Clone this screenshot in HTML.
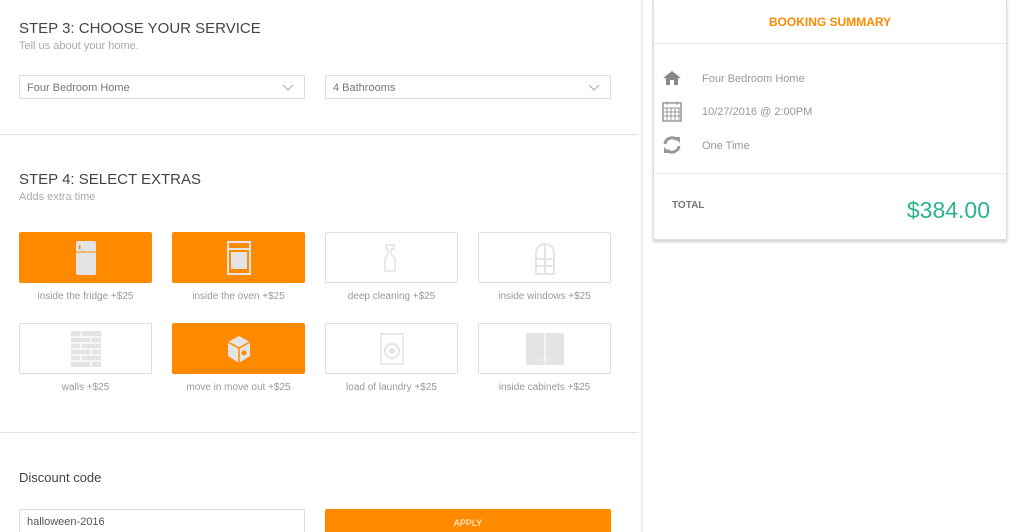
<!DOCTYPE html>
<html><head><meta charset="utf-8"><style>
*{box-sizing:border-box;margin:0;padding:0}
html,body{width:1024px;height:532px;overflow:hidden}
body{background:#fff;font-family:"Liberation Sans",Arial,sans-serif;position:relative}
.a{position:absolute}
h2{position:absolute;font-weight:normal;font-size:15px;color:#444;left:19px}
.sub{position:absolute;left:19px;font-size:11px;color:#aaa}
.sel{position:absolute;height:24px;border:1px solid #ddd;font-size:11px;color:#777;padding:6px 0 0 7px}
.sel svg{position:absolute;right:10px;top:8px}
.hr{position:absolute;left:0;width:638px;height:1px;background:#e4e4e4}
.box{position:absolute;width:133px;height:51px;border:1px solid #ddd;border-radius:2px;display:flex;align-items:center;justify-content:center}
.box.on{background:#ff8a00;border-color:#ff8a00}
.lbl{position:absolute;width:133px;text-align:center;font-size:10px;color:#999}
.card{position:absolute;left:653px;top:-2px;width:354px;height:242px;border:1px solid #ddd;box-shadow:0 2px 3px rgba(0,0,0,.2);background:#fff}
.row{position:absolute;left:702px;font-size:11px;color:#999}
</style></head><body>
<div class="a" style="left:641px;top:0;width:2px;height:532px;background:#eceeee"></div>
<h2 style="top:20px">STEP 3: CHOOSE YOUR SERVICE</h2>
<div class="sub" style="top:40px">Tell us about your home.</div>
<div class="sel" style="left:19px;top:75px;width:286px">Four Bedroom Home<svg width="12" height="8"><path d="M1 1l5 5 5-5" stroke="#aaa" fill="none"/></svg></div>
<div class="sel" style="left:325px;top:75px;width:286px">4 Bathrooms<svg width="12" height="8"><path d="M1 1l5 5 5-5" stroke="#aaa" fill="none"/></svg></div>
<div class="hr" style="top:134px"></div>
<h2 style="top:171px">STEP 4: SELECT EXTRAS</h2>
<div class="sub" style="top:191px">Adds extra time</div>

<div class="box on" style="left:19px;top:232px"><svg width="22" height="36"><rect x="1" y="1" width="20" height="34" rx="2" fill="#e4e4e4"/><line x1="1" y1="12" x2="21" y2="12" stroke="#ff8a00"/><rect x="4" y="5" width="1.5" height="4" fill="#ff8a00"/></svg></div>
<div class="box on" style="left:172px;top:232px"><svg width="24" height="34"><rect x="1" y="1" width="22" height="32" fill="none" stroke="#e4e4e4" stroke-width="2"/><line x1="1" y1="8" x2="23" y2="8" stroke="#e4e4e4" stroke-width="2"/><rect x="4" y="11" width="16" height="17" fill="#e4e4e4"/></svg></div>
<div class="box" style="left:325px;top:232px"><svg width="20" height="30"><path d="M4 2h8v4h-3v4l4 6v12H3V16l3-6V6H4z" fill="none" stroke="#e4e4e4" stroke-width="1.5"/></svg></div>
<div class="box" style="left:478px;top:232px"><svg width="22" height="34"><path d="M2 33V12a9 9 0 0118 0v21z" fill="none" stroke="#e4e4e4" stroke-width="2"/><path d="M11 4v29M2 18h18M2 25h18" stroke="#e4e4e4" stroke-width="2"/></svg></div>
<div class="lbl" style="left:19px;top:291px">inside the fridge +$25</div>
<div class="lbl" style="left:172px;top:291px">inside the oven +$25</div>
<div class="lbl" style="left:325px;top:291px">deep cleaning +$25</div>
<div class="lbl" style="left:478px;top:291px">inside windows +$25</div>

<div class="box" style="left:19px;top:323px"><svg width="30" height="36"><rect x="0" y="0" width="30" height="36" fill="#e4e4e4"/><path d="M0 6h30M0 12h30M0 18h30M0 24h30M0 30h30M10 0v6M20 6v6M10 12v6M20 18v6M10 24v6M20 30v6" stroke="#fff" stroke-width="1.2"/></svg></div>
<div class="box on" style="left:172px;top:323px"><svg width="26" height="30"><path d="M2 8l11-6 11 6v14l-11 7-11-7z" fill="#e4e4e4"/><path d="M2 8l11 6 11-6M13 14v15" stroke="#ff8a00" stroke-width="1.5" fill="none"/><circle cx="18" cy="19" r="2.5" fill="#ff8a00"/></svg></div>
<div class="box" style="left:325px;top:323px"><svg width="24" height="32"><rect x="1" y="1" width="22" height="30" fill="none" stroke="#e4e4e4" stroke-width="1.5"/><circle cx="12" cy="18" r="7" fill="none" stroke="#e4e4e4" stroke-width="2"/><circle cx="12" cy="18" r="3" fill="#e4e4e4"/></svg></div>
<div class="box" style="left:478px;top:323px"><svg width="38" height="32"><rect width="38" height="32" fill="#e4e4e4"/><line x1="19" y1="0" x2="19" y2="32" stroke="#fff"/><path d="M14 27h3M21 27h3" stroke="#fff"/></svg></div>
<div class="lbl" style="left:19px;top:382px">walls +$25</div>
<div class="lbl" style="left:172px;top:382px">move in move out +$25</div>
<div class="lbl" style="left:325px;top:382px">load of laundry +$25</div>
<div class="lbl" style="left:478px;top:382px">inside cabinets +$25</div>

<div class="hr" style="top:432px"></div>
<div class="a" style="left:19px;top:470px;font-size:13px;color:#444">Discount code</div>
<div class="sel" style="left:19px;top:509px;width:286px;height:30px;color:#555">halloween-2016</div>
<div class="a" style="left:325px;top:509px;width:286px;height:30px;background:#ff8a00;color:#fff;font-size:9px;text-align:center;padding-top:9px;border-radius:2px">APPLY</div>

<div class="card">
<div class="a" style="left:0;top:16px;width:352px;text-align:center;color:#ff8a00;font-weight:bold;font-size:12px">BOOKING SUMMARY</div>
<div class="a" style="left:0;top:44px;width:352px;height:1px;background:#e8e8e8"></div>
<div class="a" style="left:0;top:174px;width:352px;height:1px;background:#e8e8e8"></div>
<div class="a" style="left:18px;top:201px;font-size:10px;font-weight:bold;color:#777">TOTAL</div>
<div class="a" style="right:16px;top:198px;font-size:23px;color:#2bb38c">$384.00</div>
</div>
<svg class="a" style="left:662px;top:70px" width="20" height="16"><path d="M1 8L10 1l9 7h-3v7h-4v-5H8v5H4V8z" fill="#888"/></svg>
<svg class="a" style="left:662px;top:100px" width="20" height="22"><rect x="1" y="3" width="18" height="18" fill="none" stroke="#999" stroke-width="1.5"/><path d="M1 8h18M1 12h18M1 16h18M5 8v13M9 8v13M13 8v13M17 8v13M5 1v4M15 1v4" stroke="#999" stroke-width="1"/></svg>
<svg class="a" style="left:662px;top:135px" width="20" height="20"><path d="M3 9a7 7 0 0112-4M17 11a7 7 0 01-12 4" stroke="#999" stroke-width="3" fill="none"/><path d="M12 2h6v6zM8 18H2v-6z" fill="#999"/></svg>
<div class="row" style="top:73px">Four Bedroom Home</div>
<div class="row" style="top:106px">10/27/2016 @ 2:00PM</div>
<div class="row" style="top:140px">One Time</div>
</body></html>
